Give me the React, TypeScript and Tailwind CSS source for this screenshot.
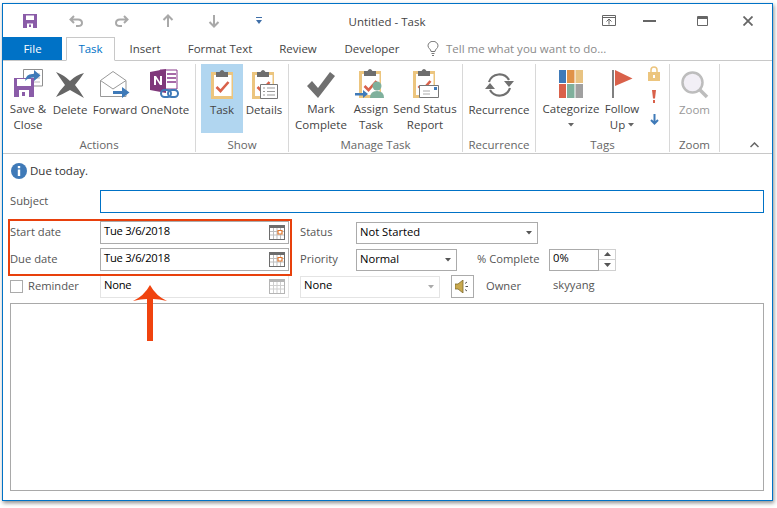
import type { ReactNode } from 'react';

const purple = '#8a5ca8';
const red = '#d9614a';
const tan = '#ecc57e';
const gray = '#6e6e6e';
const blue = '#3f7ab8';

function SaveIcon({ color = purple }: { color?: string }) {
    return (
        <svg width="14" height="14" viewBox="0 0 14 14">
            <path d="M0 0H14V14H0Z" fill={color} />
            <path d="M3 1.500H11V6H3Z" fill="#fff" />
            <path d="M4 9.500H10V14H4Z" fill="#fff" />
            <path d="M6 10.500H8V13H6Z" fill={color} />
        </svg>
    );
}

function QatArrow({ d }: { d: string }) {
    return (
        <svg width="16" height="16" viewBox="0 0 16 16" fill="none" stroke="#a9a9a9" strokeWidth="2">
            <path d={d} />
        </svg>
    );
}

function Clipboard() {
    return (
        <g>
            <path d="M2 3H24V30H2Z" fill={tan} />
            <path d="M5 6H22.500V27H5Z" fill="#fff" />
            <path d="M7 6V3H10.500Q13 -1 15.500 3H19V8H7Z" fill={gray} />
            <path d="M7.500 18L11.500 22L19.500 13" fill="none" stroke={red} strokeWidth="2.600" />
        </g>
    );
}

function Calendar({ faded = false }: { faded?: boolean }) {
    const dark = faded ? '#b5b5b5' : '#6d6d6d';
    const line = faded ? '#cfcfcf' : '#bdbdbd';
    return (
        <svg width="16" height="15" viewBox="0 0 16 15" className="shrink-0">
            <path d="M0 0H16V15H0Z" fill={dark} />
            <path d="M1 3H15V14H1Z" fill="#fff" />
            <path d="M4.500 3V14M8 3V14M11.500 3V14M1 6.500H15M1 10H15" stroke={line} strokeWidth="1" />
            {!faded && <path d="M9 5.500H13V9H9Z" fill="#fff" stroke="#e2762b" strokeWidth="1.200" />}
        </svg>
    );
}

function Caret({ color = '#666' }: { color?: string }) {
    return (
        <svg width="6" height="4" viewBox="0 0 6 4" className="shrink-0">
            <path d="M0 0H6L3 3.500Z" fill={color} />
        </svg>
    );
}

function RibbonButton({ width, label, icon, active, muted }: { width: number; label: ReactNode; icon: ReactNode; active?: boolean; muted?: boolean }) {
    return (
        <div
            className={`flex h-[69px] shrink-0 flex-col items-center leading-[16px] ${active ? 'bg-[#b1d6f0]' : ''} ${muted ? 'text-[#999]' : 'text-[#444]'}`}
            style={{ width }}
        >
            <div className="flex h-[38px] w-full items-end justify-center pb-[3px]">{icon}</div>
            <div className="whitespace-nowrap text-center">{label}</div>
        </div>
    );
}

function Group({ width, pad, label, children, last }: { width: number; pad: number; label: string; children: ReactNode; last?: boolean }) {
    return (
        <div className={`relative flex h-[88px] shrink-0 flex-col ${last ? '' : 'border-r border-[#d8d8d8]'}`} style={{ width, paddingLeft: pad }}>
            <div className="flex h-[71px] items-start">{children}</div>
            <div className="absolute inset-x-0 bottom-[-1px] text-center leading-[16px] text-[#666]">{label}</div>
        </div>
    );
}

function Tab({ width, children }: { width: number; children: ReactNode }) {
    return (
        <div className="flex h-full shrink-0 items-center justify-center whitespace-nowrap text-[#444]" style={{ width }}>
            {children}
        </div>
    );
}

function DateField({ value, faded }: { value: string; faded?: boolean }) {
    return (
        <div className={`flex h-[23px] w-[189px] items-center justify-between border pl-[3px] pr-[3px] text-black ${faded ? 'border-[#e4e4e4]' : 'border-[#ababab]'}`}>
            <span className="mb-[2px] tracking-[-0.25px]">{value}</span>
            <Calendar faded={faded} />
        </div>
    );
}

function Select({ width, value, faded }: { width: number; value: string; faded?: boolean }) {
    return (
        <div
            className={`flex h-[22px] shrink-0 items-center justify-between border pl-[3px] pr-[5px] text-black ${faded ? 'border-[#e4e4e4]' : 'border-[#ababab]'}`}
            style={{ width }}
        >
            <span className={faded ? 'mb-[2px]' : 'mb-px'}>{value}</span>
            <Caret color={faded ? '#aaa' : '#555'} />
        </div>
    );
}

export default function App() {
    return (
        <div className="relative h-[508px] w-[777px] overflow-hidden bg-white font-['Open_Sans',sans-serif] text-[11.5px]">
            {/* window */}
            <div className="ml-[2px] mt-[3px] flex h-[498px] w-[771px] flex-col border border-[#0072c6] bg-white shadow-[1px_2px_4px_rgba(0,0,0,0.45)]">
                {/* title bar */}
                <div className="flex h-[33px] shrink-0 items-center text-[#444]">
                    <div className="ml-[20px] flex w-[14px] justify-center"><SaveIcon /></div>
                    <div className="ml-[31px] flex w-[16px]"><QatArrow d="M6 3L2.500 6.500L6 10M3 6.500H10Q14 6.500 14 10Q14 13 10 13H8" /></div>
                    <div className="ml-[30px] flex w-[16px]"><QatArrow d="M10 3L13.500 6.500L10 10M13 6.500H6Q2 6.500 2 10Q2 13 6 13H8" /></div>
                    <div className="ml-[30px] flex w-[16px]"><QatArrow d="M8 14V3M3.500 7L8 2.500L12.500 7" /></div>
                    <div className="ml-[30px] flex w-[16px]"><QatArrow d="M8 2V13M3.500 9L8 13.500L12.500 9" /></div>
                    <svg width="6" height="7" viewBox="0 0 6 7" className="ml-[34px]">
                        <path d="M0 0H6V1H0ZM0 3H6L3 7Z" fill="#3f6fa8" />
                    </svg>
                    <div className="ml-[85px] mt-[2px] w-[80px] whitespace-nowrap text-center">Untitled - Task</div>
                    <svg width="14" height="11" viewBox="0 0 14 11" fill="none" className="ml-[175px]" stroke="#666">
                        <path d="M.500.500H13.500V10.500H.500ZM1 2.500H13M7 9.500V4.500M4.500 6.500L7 4L9.500 6.500" />
                    </svg>
                    <div className="ml-[27px] h-[2px] w-[13px] bg-[#666]" />
                    <svg width="11" height="10" viewBox="0 0 11 10" fill="none" className="ml-[41px]" stroke="#666">
                        <path d="M.500.500H10.500V9.500H.500ZM0 1.500H11M0 2.500H11" />
                    </svg>
                    <svg width="10" height="10" viewBox="0 0 10 10" fill="none" className="ml-[35px]" stroke="#666" strokeWidth="1.800">
                        <path d="M.500.500L9.500 9.500M9.500.500L.500 9.500" />
                    </svg>
                </div>

                {/* tabs */}
                <div className="flex h-[24px] shrink-0 border-b border-[#c8c8c8]">
                    <div className="flex h-full w-[59px] items-center justify-center bg-[#0072c6] text-white">File</div>
                    <div className="ml-[4px] flex h-[24px] w-[49px] items-center justify-center border border-b-white border-[#c8c8c8] text-[#0072c6]">Task</div>
                    <Tab width={60}>Insert</Tab>
                    <Tab width={90}>Format Text</Tab>
                    <Tab width={66}>Review</Tab>
                    <Tab width={82}>Developer</Tab>
                    <svg width="12" height="15" viewBox="0 0 12 15" fill="none" stroke="#777" className="ml-[14px] mt-[4px]">
                        <path d="M4 10.500C4 8 1 7.500 1 4.800A5 4.500 0 0 1 11 4.800C11 7.500 8 8 8 10.500ZM4.500 12.500H7.500M5 14.500H7" />
                    </svg>
                    <div className="ml-[7px] flex items-center whitespace-nowrap text-[#8a8a8a]">Tell me what you want to do...</div>
                </div>

                {/* ribbon */}
                <div className="relative flex h-[93px] shrink-0 border-b border-[#c8c8c8] pt-[3px]">
                    <Group width={193} pad={5} label="Actions">
                        <RibbonButton
                            width={40}
                            label={<>Save &amp;<br />Close</>}
                            icon={
                                <svg width="31" height="30" viewBox="0 0 31 30">
                                    <path d="M10.500 1.500H29.500V18H10.500Z" fill="#fff" stroke="#8f8f8f" />
                                    <path d="M20 6H27M21 10H27M21 14H27" stroke="#bbb" />
                                    <path d="M1 10H21V29H1Z" fill={purple} />
                                    <path d="M4 11H18V18H4ZM6 22H16V29H6Z" fill="#fff" />
                                    <path d="M9 24H12V28H9Z" fill={purple} />
                                    <path d="M12 13Q13 5 21 6V2L27.500 7.500L21 13V9.500Q15 9.500 12 13Z" fill={blue} />
                                </svg>
                            }
                        />
                        <RibbonButton
                            width={44}
                            label="Delete"
                            icon={
                                <svg width="30" height="27" viewBox="0 0 30 27">
                                    <path d="M1 0Q9 3 15 9Q21 3 29 1Q25 7 20 13Q25 19 29 26Q22 22 15 18Q8 22 1 25Q5 18 10 13Q5 6 1 0Z" fill="#666" />
                                </svg>
                            }
                        />
                        <RibbonButton
                            width={46}
                            label="Forward"
                            icon={
                                <svg width="30" height="28" viewBox="0 0 30 28" fill="none">
                                    <path d="M.500 9.500L13 .500L26 9.500V25.500H.500ZM.500 9.500L13 18L26 9.500" stroke="#999" fill="#fff" />
                                    <path d="M13 20H22V16L29.500 21.500L22 27V23H13Z" fill={blue} />
                                </svg>
                            }
                        />
                        <RibbonButton
                            width={54}
                            label="OneNote"
                            icon={
                                <svg width="31" height="30" viewBox="0 0 31 30">
                                    <path d="M10 1H27V20H10Z" fill="#fff" stroke="#8a3a8c" />
                                    <path d="M17 5H26M17 9H26M17 13H26" stroke="#8a3a8c" strokeWidth="1.500" />
                                    <path d="M0 3L16 0V24L0 21Z" fill="#80397b" />
                                    <path d="M4 16V7H6L10 13V7H12V16H10L6 10V16Z" fill="#fff" />
                                    <rect x="11" y="21" width="10" height="7" rx="3.500" fill="none" stroke={blue} strokeWidth="2" />
                                    <rect x="18" y="21" width="10" height="7" rx="3.500" fill="none" stroke={blue} strokeWidth="2" />
                                </svg>
                            }
                        />
                    </Group>
                    <Group width={93} pad={5} label="Show">
                        <RibbonButton
                            width={42}
                            active
                            label="Task"
                            icon={
                                <svg width="26" height="30" viewBox="0 0 26 30"><Clipboard /></svg>
                            }
                        />
                        <RibbonButton
                            width={42}
                            label="Details"
                            icon={
                                <svg width="28" height="30" viewBox="0 0 28 30">
                                    <Clipboard />
                                    <path d="M10.500 15.500H27.500V29.500H10.500Z" fill="#fff" stroke="#777" />
                                    <path d="M13 19H15M17 19H25M13 22.500H15M17 22.500H25M13 26H15M17 26H25" stroke="#999" />
                                </svg>
                            }
                        />
                    </Group>
                    <Group width={174} pad={6} label="Manage Task">
                        <RibbonButton
                            width={52}
                            label={<>Mark<br />Complete</>}
                            icon={
                                <svg width="28" height="26" viewBox="0 0 28 26">
                                    <path d="M0 14L5 9L11 16L23 0L28 4L11 26Z" fill="#707070" />
                                </svg>
                            }
                        />
                        <RibbonButton
                            width={48}
                            label={<>Assign<br />Task</>}
                            icon={
                                <svg width="32" height="30" viewBox="0 0 32 30">
                                    <g transform="translate(2 0)"><Clipboard /></g>
                                    <circle cx="22" cy="18" r="4.500" fill="#7fb09c" />
                                    <path d="M15 30Q15 23 22 23Q29 23 29 30Z" fill="#7fb09c" />
                                    <path d="M0 25H8V22L13 26L8 30V27.500H0Z" fill={blue} />
                                </svg>
                            }
                        />
                        <RibbonButton
                            width={60}
                            label={<>Send Status<br />Report</>}
                            icon={
                                <svg width="28" height="30" viewBox="0 0 28 30">
                                    <Clipboard />
                                    <path d="M8.500 17.500H27.500V29.500H8.500Z" fill="#fff" stroke="#777" />
                                    <path d="M12 23H19M12 26H19" stroke="#aaa" />
                                    <path d="M23 19H26V22H23Z" fill={blue} />
                                </svg>
                            }
                        />
                    </Group>
                    <Group width={73} pad={0} label="Recurrence">
                        <RibbonButton
                            width={72}
                            label="Recurrence"
                            icon={
                                <svg width="31" height="28" viewBox="0 0 31 28" fill="none">
                                    <path d="M5 11A11 11 0 0 1 25 9" stroke="#707070" strokeWidth="2.200" />
                                    <path d="M26 17A11 11 0 0 1 6 19" stroke="#707070" strokeWidth="2.200" />
                                    <path d="M20 10H30L25 16ZM1 18H11L6 12Z" fill="#707070" />
                                </svg>
                            }
                        />
                    </Group>
                    <Group width={134} pad={5} label="Tags">
                        <RibbonButton
                            width={60}
                            label={<>Categorize<br /><span className="flex h-[16px] items-center justify-center"><Caret /></span></>}
                            icon={
                                <svg width="24" height="28" viewBox="0 0 24 28">
                                    <path d="M0 0H7V13H0Z" fill={blue} />
                                    <path d="M8 0H15.500V13H8Z" fill="#e09248" />
                                    <path d="M16.500 0H24V13H16.500Z" fill="#e8c382" />
                                    <path d="M0 14H7V28H0Z" fill={red} />
                                    <path d="M8 14H15.500V28H8Z" fill="#7fb09c" />
                                    <path d="M16.500 14H24V28H16.500Z" fill="#a0a0a0" />
                                </svg>
                            }
                        />
                        <RibbonButton
                            width={42}
                            label={<>Follow<br /><span className="inline-flex items-center gap-[3px]">Up <Caret /></span></>}
                            icon={
                                <svg width="21" height="28" viewBox="0 0 21 28">
                                    <path d="M0 0H2V28H0Z" fill="#808080" />
                                    <path d="M3 0L20.500 8.500L3 16Z" fill={red} />
                                </svg>
                            }
                        />
                        <div className="flex w-[22px] shrink-0 flex-col items-center pt-[2px]">
                            <svg width="12" height="15" viewBox="0 0 12 15" fill="none">
                                <path d="M3 7V4A3 3 0 0 1 9 4V7" stroke={tan} strokeWidth="1.500" />
                                <path d="M0 6H12V15H0Z" fill={tan} />
                                <path d="M5 9H7V12H5Z" fill="#fff" />
                            </svg>
                            <svg width="4" height="13" viewBox="0 0 4 13" className="mt-[9px]">
                                <path d="M0 0H4L3 8.500H1ZM1 10H3V13H1Z" fill={red} />
                            </svg>
                            <svg width="9" height="11" viewBox="0 0 9 11" className="mt-[11px]" fill="none" stroke={blue} strokeWidth="2">
                                <path d="M4.500 0V9M1 6L4.500 9.500L8 6" />
                            </svg>
                        </div>
                    </Group>
                    <Group width={50} pad={0} label="Zoom">
                        <RibbonButton
                            width={49}
                            muted
                            label="Zoom"
                            icon={
                                <svg width="28" height="28" viewBox="0 0 28 28" fill="none">
                                    <circle cx="11.500" cy="11.500" r="10" fill="#f2eff6" stroke="#bdbdbd" strokeWidth="2.500" />
                                    <path d="M18.500 18.500L26 26" stroke="#bdbdbd" strokeWidth="3.500" />
                                </svg>
                            }
                        />
                    </Group>
                    <svg width="9" height="6" viewBox="0 0 9 6" fill="none" stroke="#666" strokeWidth="1.500" className="absolute bottom-[5px] right-[13px]">
                        <path d="M.500 5L4.500 1L8.500 5" />
                    </svg>
                </div>

                {/* form */}
                <div className="flex min-h-0 flex-1 flex-col pl-[7px] pr-[8px] text-[11.2px] text-[#555]">
                    <div className="mt-[9px] flex h-[16px] items-center pl-px text-[11.5px] text-[#333]">
                        <svg width="16" height="16" viewBox="0 0 16 16">
                            <circle cx="8" cy="8" r="8" fill={blue} />
                            <path d="M6.800 3H9.200V5.200H6.800ZM6.800 6.500H9.200V13H6.800Z" fill="#fff" />
                        </svg>
                        <span className="ml-[3px]">Due today.</span>
                    </div>
                    <div className="mt-[11px] flex h-[23px] items-center">
                        <span className="mb-px w-[90px] shrink-0">Subject</span>
                        <div className="h-full flex-1 border border-[#0072c6]" />
                    </div>
                    <div className="mt-[8px] flex h-[23px] items-center">
                        <span className="mb-px w-[90px] shrink-0">Start date</span>
                        <DateField value="Tue 3/6/2018" />
                        <span className="mb-px ml-[11px] w-[56px] shrink-0">Status</span>
                        <Select width={182} value="Not Started" />
                    </div>
                    <div className="mt-[4px] flex h-[23px] items-center">
                        <span className="mb-px w-[90px] shrink-0">Due date</span>
                        <DateField value="Tue 3/6/2018" />
                        <span className="mb-px ml-[11px] w-[56px] shrink-0">Priority</span>
                        <Select width={101} value="Normal" />
                        <span className="mb-px ml-[20px] w-[72px] shrink-0">% Complete</span>
                        <div className="flex h-[22px] w-[50px] shrink-0 items-center border border-[#ababab] pl-[3px] text-black">
                            <span className="mb-[2px]">0%</span>
                        </div>
                        <div className="flex h-[22px] w-[17px] shrink-0 flex-col border border-l-0 border-[#d0d0d0]">
                            <div className="flex flex-1 items-center justify-center border-b border-[#d0d0d0]">
                                <svg width="7" height="4" viewBox="0 0 7 4"><path d="M0 4H7L3.500 0Z" fill="#555" /></svg>
                            </div>
                            <div className="flex flex-1 items-center justify-center">
                                <svg width="7" height="4" viewBox="0 0 7 4"><path d="M0 0H7L3.500 4Z" fill="#555" /></svg>
                            </div>
                        </div>
                    </div>
                    <div className="mt-[4px] flex h-[23px] items-center">
                        <div className="h-[13px] w-[13px] shrink-0 border border-[#ababab]" />
                        <span className="ml-[5px] w-[72px] shrink-0">Reminder</span>
                        <DateField value="None" faded />
                        <div className="ml-[11px]"><Select width={140} value="None" faded /></div>
                        <div className="ml-[11px] flex h-[23px] w-[23px] shrink-0 items-center justify-center border border-[#ababab]">
                            <svg width="15" height="13" viewBox="0 0 15 13" fill="none">
                                <path d="M0 4H3L8 0V13L3 9H0Z" fill="#c9a94e" stroke="#7d6a2c" strokeWidth=".8" />
                                <path d="M10 3.500L12 2M10.500 6.500H13M10 9.500L12 11" stroke="#555" />
                            </svg>
                        </div>
                        <span className="ml-[12px] w-[67px] shrink-0">Owner</span>
                        <span className="mb-[2px]">skyyang</span>
                    </div>
                    <div className="mb-[9px] mt-[5px] flex-1 border border-[#a9a9a9]" />
                </div>
            </div>

            {/* annotation */}
            <div className="absolute left-[8px] top-[219px] h-[57px] w-[284px] border-2 border-[#e8400c]" />
            <svg width="36" height="58" viewBox="0 0 36 58" className="absolute left-[132px] top-[284px]">
                <path d="M18 1Q24 12 35 17Q27 15 21 15V57H15V15Q9 15 1 17Q12 12 18 1Z" fill="#f0430f" />
            </svg>
        </div>
    );
}
